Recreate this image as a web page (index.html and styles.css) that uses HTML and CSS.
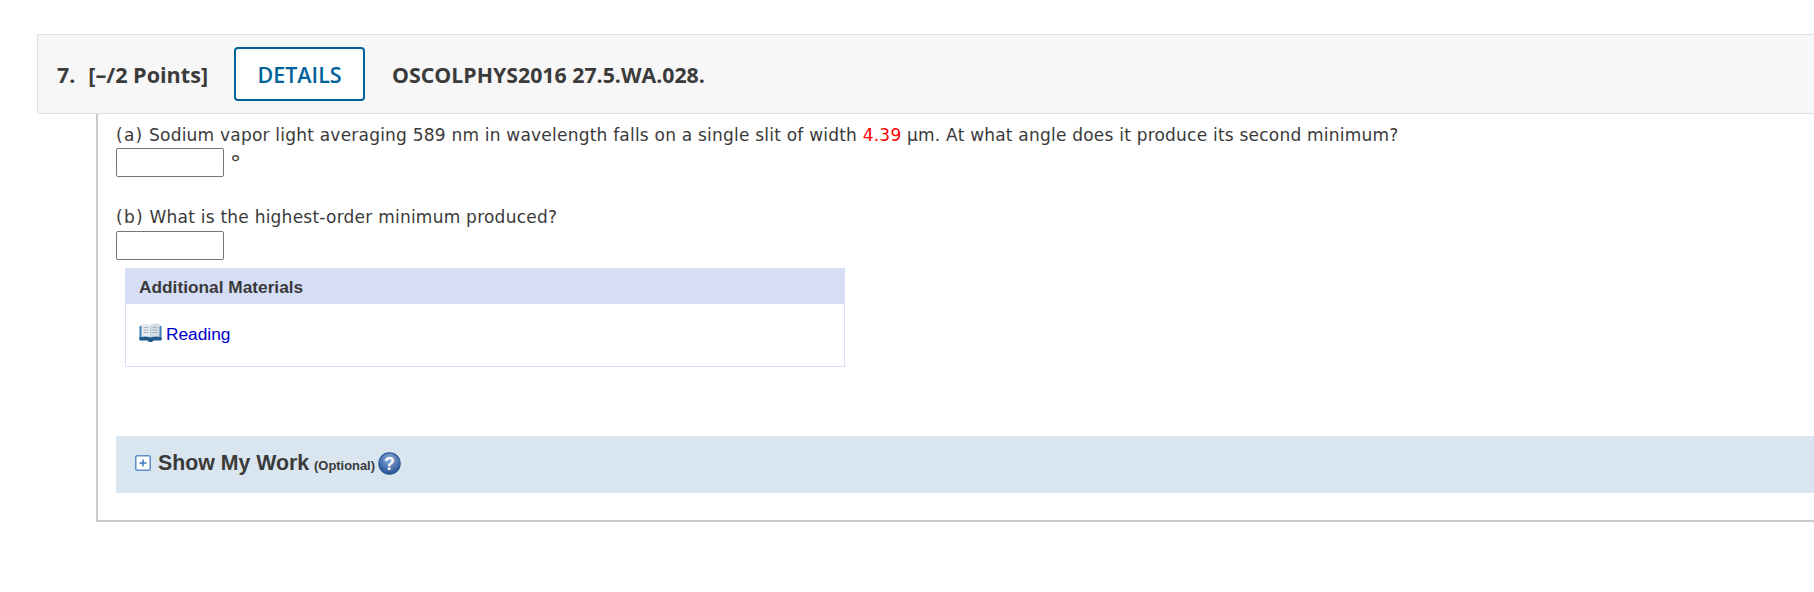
FILE: index.html
```html
<!DOCTYPE html>
<html lang="en">
<head>
    <meta charset="UTF-8">
    <meta name="viewport" content="width=device-width, initial-scale=1.0">
    <title>Question 7</title>
    <link rel="stylesheet" href="styles.css">
</head>
<body>
    <section class="question">
        <header class="q-head">
            <span class="q-num">7.</span>
            <span class="q-points">[&ndash;/2 Points]</span>
            <button class="details" type="button">DETAILS</button>
            <span class="q-code">OSCOLPHYS2016 27.5.WA.028.</span>
        </header>
        <div class="q-body">
            <p class="prompt part-a"><span class="part-label">(a)</span> Sodium vapor light averaging 589 nm in wavelength falls on a single slit of width <span class="val">4.39</span> &micro;m. At what angle does it produce its second minimum?</p>
            <div class="answer"><input class="box" type="text"><span class="unit">&deg;</span></div>
            <p class="prompt part-b"><span class="part-label">(b)</span> What is the highest-order minimum produced?</p>
            <div class="answer"><input class="box" type="text"></div>

            <div class="materials">
                <div class="materials-head">Additional Materials</div>
                <div class="materials-body">
                    <svg class="book" width="23" height="20" viewBox="0 0 22 20">
                        <path d="M0 3h22v14H0z" fill="#3f7fb5"/>
                        <path d="M0 14h22v3.500h-8l-1.500 1.500h-3L8 17.500H0z" fill="#235a8c"/>
                        <path d="M2 1c3.500-1 7-.5 9 1v12.500c-2.500-1.200-6-1.200-9-.5z" fill="#e6ecf1"/>
                        <path d="M20 1c-3.500-1-7-.5-9 1v12.500c2.500-1.200 6-1.200 9-.5z" fill="#d3dde6"/>
                        <path d="M4 4.500h5M4 7h5M4 9.500h5M13 4.500h5M13 7h5M13 9.500h5" stroke="#a5b1bc" stroke-width="1"/>
                    </svg>
                    <a class="reading" href="#">Reading</a>
                </div>
            </div>

            <div class="work">
                <svg class="plus" width="16" height="16" viewBox="0 0 16 16">
                    <rect x="0.750" y="0.750" width="14.500" height="14.500" rx="1.500" fill="#fff" stroke="#5b8fc7" stroke-width="1.500"/>
                    <path d="M4.500 8h7M8 4.500v7" stroke="#3d7ac0" stroke-width="1.500"/>
                </svg>
                <span class="work-title">Show My Work</span>
                <span class="work-opt">(Optional)</span>
                <svg class="help" width="23" height="23" viewBox="0 0 22 22">
                    <defs>
                        <radialGradient id="helpFill" cx="50%" cy="30%" r="70%">
                            <stop offset="0" stop-color="#8fb0dd"/>
                            <stop offset="1" stop-color="#264f96"/>
                        </radialGradient>
                    </defs>
                    <circle cx="11" cy="11" r="10.250" fill="url(#helpFill)" stroke="#2b5796" stroke-width="1"/>
                    <text class="help-mark" x="11" y="17" text-anchor="middle">?</text>
                </svg>
            </div>
        </div>
    </section>
</body>
</html>
```

FILE: styles.css
```css
* {
    box-sizing: border-box;
}

html, body {
    overflow: hidden;
}

body {
    margin: 0;
    height: 592px;
    background: #fff;
    color: #333;
}

.question {
    padding: 34px 0 0 37px;
}

/* grey title bar, runs off the right edge */
.q-head {
    display: flex;
    align-items: center;
    height: 80px;
    background: #f7f7f7;
    border: 1px solid #dedede;
    border-right: 0;
    border-radius: 2px 0 0 2px;
    padding-left: 19px;
    font-family: "Open Sans", sans-serif;
    font-weight: 700;
    font-size: 21.300px;
    color: #3b3b3b;
}

.q-num {
    margin-right: 13px;
}

.q-points {
    font-size: 21.600px;
    margin-right: 26px;
}

.details {
    width: 131px;
    height: 54px;
    margin-right: 27px;
    background: #fff;
    border: 2px solid #00629b;
    border-radius: 4px;
    color: #00629b;
    font: inherit;
    font-weight: 600;
    font-size: 21.500px;
    padding: 0;
}

/* question content */
.q-body {
    margin-left: 59px;
    height: 408px;
    border-left: 2px solid #ccc;
    border-bottom: 2px solid #ccc;
    padding: 9px 0 0 18px;
    font-family: "DejaVu Sans", sans-serif;
    font-size: 17px;
    letter-spacing: 0.235px;
    color: #3a3a3a;
}

.prompt {
    margin: 0;
    line-height: 24px;
}

.part-a {
    letter-spacing: 0.215px;
}

.part-label {
    letter-spacing: 1.250px;
}

.part-b {
    margin: 28px 0 2px;
}

.val {
    color: #f00;
}

.answer {
    display: flex;
    height: 29px;
    margin-top: 1px;
}

.box {
    width: 108px;
    height: 29px;
    border: 1px solid #767676;
    border-radius: 2px;
    background: #fff;
    padding: 0;
}

.unit {
    margin-left: 6px;
    font-size: 22px;
    line-height: 32px;
}

.materials {
    width: 720px;
    height: 99px;
    margin: 8px 0 0 9px;
    border: 1px solid #d6e0f5;
    border-top-width: 2px;
    font-family: "Liberation Sans", sans-serif;
    letter-spacing: 0;
}

.materials-head {
    height: 34px;
    padding-left: 13px;
    background: #d6def7;
    font-weight: 700;
    font-size: 17.300px;
    line-height: 34px;
    color: #3a3a3a;
}

.materials-body {
    display: flex;
    align-items: center;
    padding: 20px 0 0 13px;
}

.book {
    margin-right: 4px;
    margin-top: -3px;
}

.reading {
    color: #00c;
    font-size: 17.300px;
    text-decoration: none;
}

/* show my work strip */
.work {
    display: flex;
    align-items: center;
    height: 57px;
    margin-top: 69px;
    padding: 0 0 3px 19px;
    background: #d9e5ef;
    font-family: "Liberation Sans", sans-serif;
    font-weight: 700;
    color: #3a3a3a;
    letter-spacing: 0;
}

.plus {
    margin-right: 7px;
}

.work-title {
    font-size: 21.300px;
    margin-right: 5px;
}

.work-opt {
    font-size: 12.900px;
    margin-top: 5px;
    margin-right: 3px;
}

.help-mark {
    font-family: "Liberation Sans", sans-serif;
    font-weight: 700;
    font-size: 17px;
    fill: #fff;
}
```
